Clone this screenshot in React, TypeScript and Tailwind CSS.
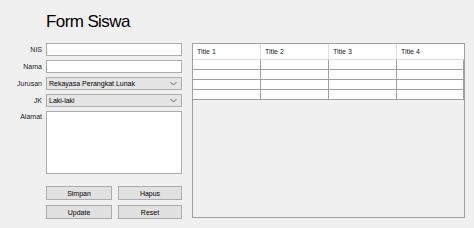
import React from 'react';

const font = { fontFamily: '"Liberation Sans", Arial, sans-serif' };

const Chevron: React.FC = () => (
  <svg width="7" height="5" viewBox="0 0 7 5" className="shrink-0">
    <polyline points="0.5,1 3.5,4 6.5,1" fill="none" stroke="#555" strokeWidth="0.9" />
  </svg>
);

const Row: React.FC<{ label: string; children: React.ReactNode }> = ({ label, children }) => (
  <div className="flex items-center">
    <div className="w-[42px] text-right text-[7px] leading-none text-[#222]">{label}</div>
    <div className="ml-[4px]">{children}</div>
  </div>
);

const TextBox: React.FC = () => (
  <div className="h-[13px] w-[136px] border border-[#adadad] bg-white" />
);

const Combo: React.FC<{ value: string }> = ({ value }) => (
  <div className="flex h-[13px] w-[136px] items-center justify-between border border-[#adadad] bg-[#e5e5e5] pl-[2px] pr-[4px]">
    <span className="text-[7px] leading-none text-black">{value}</span>
    <Chevron />
  </div>
);

const Btn: React.FC<{ label: string; w: string }> = ({ label, w }) => (
  <div className={`flex h-[14px] ${w} items-center justify-center border border-[#adadad] bg-[#e1e1e1] text-[7px] leading-none text-black`}>
    {label}
  </div>
);

export default function App() {
  const cols = ['Title 1', 'Title 2', 'Title 3', 'Title 4'];
  return (
    <div className="h-[228px] w-[474px] overflow-hidden bg-[#f0f0f0]" style={font}>
      <div className="h-[43px] pl-[46px] pt-[12px]">
        <h1 className="text-[17px] leading-[20px] tracking-[-0.6px] text-black">Form Siswa</h1>
      </div>
      <div className="flex">
        {/* form */}
        <div className="flex w-[182px] flex-col">
          <div className="flex flex-col gap-[4px]">
            <Row label="NIS"><TextBox /></Row>
            <Row label="Nama"><TextBox /></Row>
            <Row label="Jurusan"><Combo value="Rekayasa Perangkat Lunak" /></Row>
            <Row label="JK"><Combo value="Laki-laki" /></Row>
            <div className="flex items-start">
              <div className="w-[42px] pt-[2px] text-right text-[7px] leading-none text-[#222]">Alamat</div>
              <div className="ml-[4px] h-[63px] w-[136px] border border-[#adadad] bg-white" />
            </div>
          </div>
          <div className="ml-[46px] mt-[12px] flex flex-col gap-[5px]">
            <div className="flex gap-[6px]">
              <Btn label="Simpan" w="w-[66px]" />
              <Btn label="Hapus" w="w-[64px]" />
            </div>
            <div className="flex gap-[6px]">
              <Btn label="Update" w="w-[66px]" />
              <Btn label="Reset" w="w-[64px]" />
            </div>
          </div>
        </div>
        {/* table */}
        <div className="ml-[10px] h-[175px] w-[273px] border border-[#a0a0a0] bg-[#f0f0f0]">
          <div className="grid h-[16px] grid-cols-[68px_68px_68px_1fr] border-b border-[#dedede] bg-white">
            {cols.map((c, i) => (
              <div
                key={c}
                className={`flex items-center pl-[4px] text-[7px] leading-none text-[#222] ${i < 3 ? 'border-r border-[#dedede]' : ''}`}
              >
                {c}
              </div>
            ))}
          </div>
          {[0, 1, 2, 3].map((r) => (
            <div key={r} className="grid h-[10px] grid-cols-[68px_68px_68px_1fr] border-b border-[#a0a0a0] bg-white">
              {[0, 1, 2, 3].map((c) => (
                <div key={c} className="border-r border-[#a0a0a0]" />
              ))}
            </div>
          ))}
        </div>
      </div>
    </div>
  );
}
